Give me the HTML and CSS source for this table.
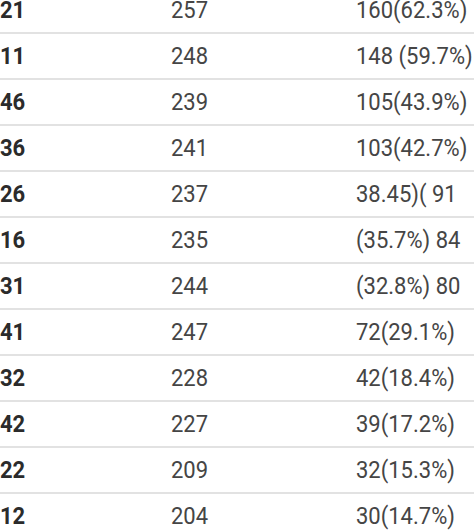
FILE: index.html
```html
<!DOCTYPE html>
<html>
<head>
<meta charset="utf-8">
<link rel="stylesheet" href="styles.css">
</head>
<body>
<div class="table">
  <div class="row first"><span class="id">21</span><span class="num">257</span><span class="num">160(62.3%)</span></div>
  <div class="row"><span class="id">11</span><span class="num">248</span><span class="num">148 (59.7%)</span></div>
  <div class="row"><span class="id">46</span><span class="num">239</span><span class="num">105(43.9%)</span></div>
  <div class="row"><span class="id">36</span><span class="num">241</span><span class="num">103(42.7%)</span></div>
  <div class="row"><span class="id">26</span><span class="num">237</span><span class="num">38.45)( 91</span></div>
  <div class="row"><span class="id">16</span><span class="num">235</span><span class="num">(35.7%) 84</span></div>
  <div class="row"><span class="id">31</span><span class="num">244</span><span class="num">(32.8%) 80</span></div>
  <div class="row"><span class="id">41</span><span class="num">247</span><span class="num">72(29.1%)</span></div>
  <div class="row"><span class="id">32</span><span class="num">228</span><span class="num">42(18.4%)</span></div>
  <div class="row"><span class="id">42</span><span class="num">227</span><span class="num">39(17.2%)</span></div>
  <div class="row"><span class="id">22</span><span class="num">209</span><span class="num">32(15.3%)</span></div>
  <div class="row"><span class="id">12</span><span class="num">204</span><span class="num">30(14.7%)</span></div>
</div>
</body>
</html>
```
FILE: styles.css
```css
html, body {
  margin: 0;
  padding: 0;
  background: #ffffff;
  overflow: hidden;
}
body {
  font-family: Roboto, "Liberation Sans", sans-serif;
  font-size: 22px;
  color: #444444;
}
.table {
  display: flex;
  flex-direction: column;
}
.row {
  display: grid;
  grid-template-columns: 171px 185px 1fr;
  align-items: center;
  height: 44px;
  border-bottom: 2px solid #e2e2e2;
  white-space: nowrap;
}
.row.first {
  height: 32px;
  align-items: start;
}
.row.first span {
  line-height: 20px;
  margin-top: 1px;
}
.row span {
  display: inline-block;
  transform: scaleY(1.06);
}
.id {
  font-weight: 700;
  color: #2b2b2b;
}
.num {
  color: #454545;
}
```
